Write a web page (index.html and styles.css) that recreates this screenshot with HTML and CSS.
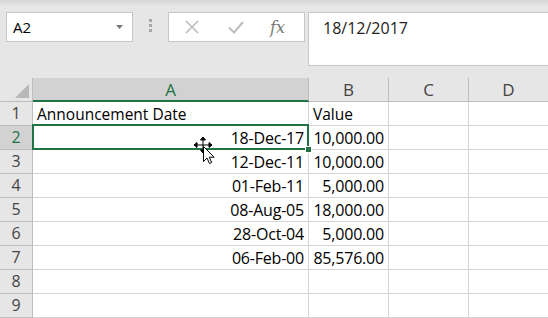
FILE: index.html
```html
<!DOCTYPE html>
<html lang="en">
<head>
    <meta charset="UTF-8">
    <title>Sheet1</title>
    <link rel="stylesheet" href="styles.css">
</head>
<body>
    <div class="toolbar">
        <div class="name-box">
            <span>A2</span>
            <svg class="caret" width="7" height="4" viewBox="0 0 7 4"><path d="M0 0h7L3.5 4z" fill="#777"/></svg>
        </div>
        <div class="grip"><i></i><i></i><i></i></div>
        <div class="fx-buttons">
            <svg width="16" height="16" viewBox="0 0 16 16"><path d="M2 2l12 12M14 2L2 14" stroke="#bcbcbc" stroke-width="1.6" fill="none"/></svg>
            <svg width="18" height="16" viewBox="0 0 18 16"><path d="M2 8.5l5 5L16 3" stroke="#bcbcbc" stroke-width="2" fill="none"/></svg>
            <span class="fx">fx</span>
        </div>
        <div class="formula">18/12/2017</div>
    </div>

    <div class="sheet">
        <div class="hd corner"><svg width="14" height="14" viewBox="0 0 14 14"><path d="M14 0v14H0z" fill="#b8b8b8"/></svg></div>
        <div class="hd col active">A</div>
        <div class="hd col">B</div>
        <div class="hd col">C</div>
        <div class="hd col">D</div>

        <div class="hd row">1</div>
        <div class="cell">Announcement Date</div>
        <div class="cell">Value</div>
        <div class="cell"></div>
        <div class="cell"></div>

        <div class="hd row sel">2</div>
        <div class="cell num current">18-Dec-17</div>
        <div class="cell num">10,000.00</div>
        <div class="cell"></div>
        <div class="cell"></div>

        <div class="hd row">3</div>
        <div class="cell num">12-Dec-11</div>
        <div class="cell num">10,000.00</div>
        <div class="cell"></div>
        <div class="cell"></div>

        <div class="hd row">4</div>
        <div class="cell num">01-Feb-11</div>
        <div class="cell num">5,000.00</div>
        <div class="cell"></div>
        <div class="cell"></div>

        <div class="hd row">5</div>
        <div class="cell num">08-Aug-05</div>
        <div class="cell num">18,000.00</div>
        <div class="cell"></div>
        <div class="cell"></div>

        <div class="hd row">6</div>
        <div class="cell num">28-Oct-04</div>
        <div class="cell num">5,000.00</div>
        <div class="cell"></div>
        <div class="cell"></div>

        <div class="hd row">7</div>
        <div class="cell num">06-Feb-00</div>
        <div class="cell num">85,576.00</div>
        <div class="cell"></div>
        <div class="cell"></div>

        <div class="hd row">8</div>
        <div class="cell"></div>
        <div class="cell"></div>
        <div class="cell"></div>
        <div class="cell"></div>

        <div class="hd row">9</div>
        <div class="cell"></div>
        <div class="cell"></div>
        <div class="cell"></div>
        <div class="cell"></div>
    </div>

    <!-- mouse pointer (move cursor) -->
    <svg class="pointer" width="26" height="30" viewBox="0 0 26 30">
        <path d="M11 1l-2.5 3h5zM11 17l-2.5-3h5zM2 9l3-2.5v5zM20 9l-3-2.5v5zM11 3v12M4 9h14" stroke="#000" stroke-width="1" fill="#000"/>
        <path d="M11.5 10.5v15l3.5-3.5 2.5 5.5 2.2-1-2.5-5.3h5z" fill="#fff" stroke="#000" stroke-width="1" stroke-linejoin="round"/>
    </svg>
</body>
</html>
```

FILE: styles.css
```css
body {
    margin: 0;
    background: #e6e6e6;
    font-family: "Open Sans", "Liberation Sans", sans-serif;
    color: #000;
    overflow: hidden;
}

.toolbar {
    height: 78px;
    box-sizing: border-box;
    padding: 12px 0 0 6px;
    display: flex;
    align-items: flex-start;
    background: linear-gradient(#d6d6d6, #e6e6e6 6px);
}

.name-box {
    width: 127px;
    height: 30px;
    box-sizing: border-box;
    border: 1px solid #c6c6c6;
    background: #fff;
    display: flex;
    align-items: center;
    justify-content: space-between;
    padding: 0 9px 0 6px;
    font-size: 15px;
}

.grip {
    width: 4px;
    margin: 7px 15px 0 16px;
    display: flex;
    flex-direction: column;
    gap: 2px;
}

.grip i {
    display: block;
    width: 3px;
    height: 3px;
    background: #a8a8a8;
}

.fx-buttons {
    width: 137px;
    height: 30px;
    box-sizing: border-box;
    border: 1px solid #c6c6c6;
    background: #fff;
    display: flex;
    align-items: center;
    gap: 27px;
    padding-left: 15px;
}

.fx {
    font-family: "DejaVu Serif", serif;
    font-style: italic;
    font-size: 16px;
    color: #777;
    margin-left: -2px;
}

.formula {
    flex: 1;
    margin-left: 3px;
    height: 54px;
    box-sizing: border-box;
    border: 1px solid #c6c6c6;
    border-right: none;
    background: #fff;
    padding: 4px 0 0 14px;
    font-size: 16px;
    color: #222;
}

.sheet {
    display: grid;
    grid-template-columns: 33px 276px 80px 80px 80px;
    grid-auto-rows: 24px;
}

.hd,
.cell {
    box-sizing: border-box;
    border-right: 1px solid #d4d4d4;
    border-bottom: 1px solid #d4d4d4;
    line-height: 23px;
    font-size: 15.5px;
    white-space: nowrap;
}

.hd {
    background: #e6e6e6;
    color: #444;
    text-align: center;
    border-color: #bdbdbd;
    font-size: 16px;
}

.hd.col {
    font-size: 17px;
}

.corner {
    display: flex;
    align-items: flex-end;
    justify-content: flex-end;
    padding: 0 3px 3px 0;
}

.col.active {
    background: #d2d2d2;
    color: #217346;
    border-bottom: 2px solid #217346;
}

.row.sel {
    background: #d2d2d2;
    color: #217346;
}

.cell {
    background: #fff;
    padding: 1px 4px 0;
}

.cell.num {
    text-align: right;
    font-size: 16px;
    letter-spacing: -0.2px;
}

.current {
    position: relative;
}

.current::before {
    content: "";
    position: absolute;
    top: -2px;
    left: -1px;
    right: -1px;
    bottom: -1px;
    border: 2px solid #217346;
}

.current::after {
    content: "";
    position: absolute;
    right: -4px;
    bottom: -4px;
    width: 5px;
    height: 5px;
    background: #217346;
    border: 1px solid #fff;
}

.pointer {
    position: absolute;
    left: 192px;
    top: 136px;
}
```
